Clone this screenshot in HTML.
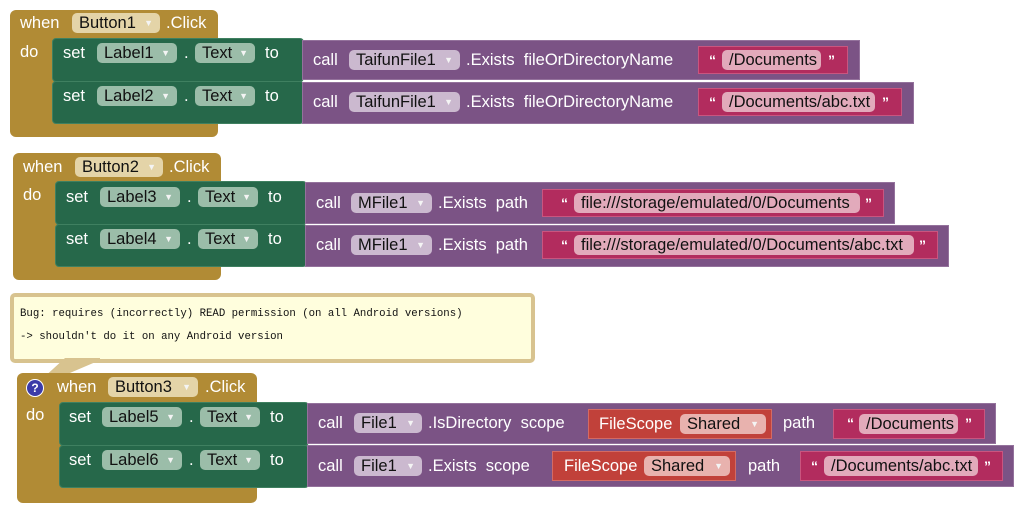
<!DOCTYPE html>
<html><head><meta charset="utf-8"><style>
body{margin:0;width:1024px;height:515px;background:#fff;position:relative;overflow:hidden;font-family:"Liberation Sans",sans-serif;font-size:16.5px;color:#fff}
div,span{position:absolute;box-sizing:border-box}
.g{background:#b18b35;border-radius:6px}
.gr{background:#26684a;border:1px solid #3f8060;border-radius:4px}
.p{background:#7b5385;border:1px solid #94729c}
.s{background:#b22c5e;border:1px solid #c9557f}
.r{background:#c1413a;border:1px solid #d46a63}
.t{line-height:20px;white-space:nowrap}
.q{font-size:14px;font-weight:bold}
.f{height:20px;line-height:20px;border-radius:5px;color:#111;padding-left:7px;white-space:nowrap}
.fg{background:#e4d4a8}
.fgr{background:#9bbda9}
.fp{background:#cbb9cf}
.fs{background:#e2aabb}
.fr{background:#e8b2ae}
.f i{font-style:normal;font-size:9px;color:#f4f4f4;position:absolute;right:7px;top:0}
</style></head><body>

<!-- Block 1 -->
<div class="g" style="left:10px;top:10px;width:208px;height:127px"></div>
<div class="t" style="left:20px;top:13px">when</div>
<div class="f fg" style="left:72px;top:13px;width:88px">Button1<i>▼</i></div>
<div class="t" style="left:166px;top:13px">.Click</div>
<div class="t" style="left:20px;top:42px">do</div>
<div class="gr" style="left:52px;top:38px;width:252px;height:44px"></div>
<div class="gr" style="left:52px;top:81px;width:252px;height:43px"></div>
<div class="p" style="left:302px;top:40px;width:558px;height:40px"></div>
<div class="p" style="left:302px;top:82px;width:612px;height:42px"></div>
<div class="s" style="left:698px;top:46px;width:150px;height:28px"></div>
<div class="s" style="left:698px;top:88px;width:204px;height:28px"></div>

<div class="t" style="left:63px;top:43px">set</div>
<div class="f fgr" style="left:97px;top:43px;width:80px">Label1<i>▼</i></div>
<div class="t" style="left:184px;top:43px">.</div>
<div class="f fgr" style="left:195px;top:43px;width:60px">Text<i>▼</i></div>
<div class="t" style="left:265px;top:43px">to</div>
<div class="t" style="left:313px;top:50px">call</div>
<div class="f fp" style="left:349px;top:50px;width:111px">TaifunFile1<i>▼</i></div>
<div class="t" style="left:466px;top:50px">.Exists&nbsp;&nbsp;fileOrDirectoryName</div>
<div class="t q" style="left:709px;top:50px">“</div>
<div class="f fs" style="left:722px;top:50px;width:99px">/Documents</div>
<div class="t q" style="left:828px;top:50px">”</div>

<div class="t" style="left:63px;top:86px">set</div>
<div class="f fgr" style="left:97px;top:86px;width:80px">Label2<i>▼</i></div>
<div class="t" style="left:184px;top:86px">.</div>
<div class="f fgr" style="left:195px;top:86px;width:60px">Text<i>▼</i></div>
<div class="t" style="left:265px;top:86px">to</div>
<div class="t" style="left:313px;top:92px">call</div>
<div class="f fp" style="left:349px;top:92px;width:111px">TaifunFile1<i>▼</i></div>
<div class="t" style="left:466px;top:92px">.Exists&nbsp;&nbsp;fileOrDirectoryName</div>
<div class="t q" style="left:709px;top:92px">“</div>
<div class="f fs" style="left:722px;top:92px;width:153px">/Documents/abc.txt</div>
<div class="t q" style="left:882px;top:92px">”</div>

<!-- Block 2 -->
<div class="g" style="left:13px;top:153px;width:208px;height:127px"></div>
<div class="t" style="left:23px;top:157px">when</div>
<div class="f fg" style="left:75px;top:157px;width:88px">Button2<i>▼</i></div>
<div class="t" style="left:169px;top:157px">.Click</div>
<div class="t" style="left:23px;top:185px">do</div>
<div class="gr" style="left:55px;top:181px;width:252px;height:44px"></div>
<div class="gr" style="left:55px;top:224px;width:252px;height:43px"></div>
<div class="p" style="left:305px;top:182px;width:590px;height:42px"></div>
<div class="p" style="left:305px;top:225px;width:644px;height:42px"></div>
<div class="s" style="left:542px;top:189px;width:342px;height:28px"></div>
<div class="s" style="left:542px;top:231px;width:396px;height:28px"></div>

<div class="t" style="left:66px;top:187px">set</div>
<div class="f fgr" style="left:100px;top:187px;width:80px">Label3<i>▼</i></div>
<div class="t" style="left:187px;top:187px">.</div>
<div class="f fgr" style="left:198px;top:187px;width:60px">Text<i>▼</i></div>
<div class="t" style="left:268px;top:187px">to</div>
<div class="t" style="left:316px;top:193px">call</div>
<div class="f fp" style="left:351px;top:193px;width:81px">MFile1<i>▼</i></div>
<div class="t" style="left:438px;top:193px">.Exists&nbsp;&nbsp;path</div>
<div class="t q" style="left:561px;top:193px">“</div>
<div class="f fs" style="left:574px;top:193px;width:286px">file:///storage/emulated/0/Documents</div>
<div class="t q" style="left:865px;top:193px">”</div>

<div class="t" style="left:66px;top:229px">set</div>
<div class="f fgr" style="left:100px;top:229px;width:80px">Label4<i>▼</i></div>
<div class="t" style="left:187px;top:229px">.</div>
<div class="f fgr" style="left:198px;top:229px;width:60px">Text<i>▼</i></div>
<div class="t" style="left:268px;top:229px">to</div>
<div class="t" style="left:316px;top:235px">call</div>
<div class="f fp" style="left:351px;top:235px;width:81px">MFile1<i>▼</i></div>
<div class="t" style="left:438px;top:235px">.Exists&nbsp;&nbsp;path</div>
<div class="t q" style="left:561px;top:235px">“</div>
<div class="f fs" style="left:574px;top:235px;width:340px">file:///storage/emulated/0/Documents/abc.txt</div>
<div class="t q" style="left:919px;top:235px">”</div>

<!-- Comment -->
<div style="left:10px;top:293px;width:525px;height:70px;background:#fffedd;border:4px solid #d8c38f;border-radius:5px"></div>
<svg style="position:absolute;left:20px;top:358px" width="80" height="40"><polygon points="45,0 85,0 10,32" fill="#d8c38f"/></svg>
<div style="left:20px;top:303px;font-family:'Liberation Mono',monospace;font-size:10.7px;color:#111;line-height:23px;white-space:pre">Bug: requires (incorrectly) READ permission (on all Android versions)
-&gt; shouldn't do it on any Android version</div>

<!-- Block 3 -->
<div class="g" style="left:17px;top:373px;width:240px;height:130px"></div>
<div style="left:26px;top:379px;width:18px;height:18px;border-radius:50%;background:#3b3ba8;border:1px solid #fff;font-size:12px;font-weight:bold;text-align:center;line-height:16px">?</div>
<div class="t" style="left:57px;top:377px">when</div>
<div class="f fg" style="left:108px;top:377px;width:90px">Button3<i>▼</i></div>
<div class="t" style="left:205px;top:377px">.Click</div>
<div class="t" style="left:26px;top:405px">do</div>
<div class="gr" style="left:59px;top:402px;width:250px;height:44px"></div>
<div class="gr" style="left:59px;top:445px;width:250px;height:43px"></div>
<div class="p" style="left:307px;top:403px;width:689px;height:41px"></div>
<div class="p" style="left:307px;top:445px;width:707px;height:42px"></div>
<div class="r" style="left:588px;top:409px;width:184px;height:30px"></div>
<div class="s" style="left:833px;top:409px;width:152px;height:30px"></div>
<div class="r" style="left:552px;top:451px;width:184px;height:30px"></div>
<div class="s" style="left:800px;top:451px;width:203px;height:30px"></div>

<div class="t" style="left:69px;top:407px">set</div>
<div class="f fgr" style="left:102px;top:407px;width:80px">Label5<i>▼</i></div>
<div class="t" style="left:189px;top:407px">.</div>
<div class="f fgr" style="left:200px;top:407px;width:60px">Text<i>▼</i></div>
<div class="t" style="left:270px;top:407px">to</div>
<div class="t" style="left:318px;top:413px">call</div>
<div class="f fp" style="left:354px;top:413px;width:68px">File1<i>▼</i></div>
<div class="t" style="left:428px;top:413px">.IsDirectory&nbsp;&nbsp;scope</div>
<div class="t" style="left:599px;top:414px">FileScope</div>
<div class="f fr" style="left:680px;top:414px;width:86px">Shared<i>▼</i></div>
<div class="t" style="left:783px;top:413px">path</div>
<div class="t q" style="left:847px;top:413px">“</div>
<div class="f fs" style="left:859px;top:414px;width:99px">/Documents</div>
<div class="t q" style="left:965px;top:413px">”</div>

<div class="t" style="left:69px;top:450px">set</div>
<div class="f fgr" style="left:102px;top:450px;width:80px">Label6<i>▼</i></div>
<div class="t" style="left:189px;top:450px">.</div>
<div class="f fgr" style="left:200px;top:450px;width:60px">Text<i>▼</i></div>
<div class="t" style="left:270px;top:450px">to</div>
<div class="t" style="left:318px;top:456px">call</div>
<div class="f fp" style="left:354px;top:456px;width:68px">File1<i>▼</i></div>
<div class="t" style="left:428px;top:456px">.Exists&nbsp;&nbsp;scope</div>
<div class="t" style="left:564px;top:456px">FileScope</div>
<div class="f fr" style="left:644px;top:456px;width:86px">Shared<i>▼</i></div>
<div class="t" style="left:748px;top:456px">path</div>
<div class="t q" style="left:811px;top:456px">“</div>
<div class="f fs" style="left:824px;top:456px;width:154px">/Documents/abc.txt</div>
<div class="t q" style="left:984px;top:456px">”</div>
</body></html>
